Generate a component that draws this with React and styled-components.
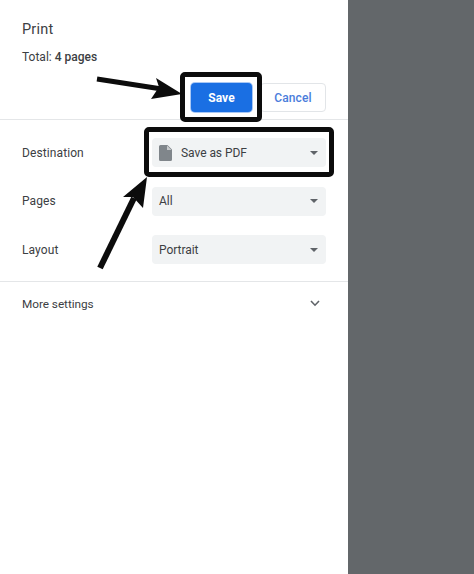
import React from "react";
import styled, { createGlobalStyle } from "styled-components";

const Global = createGlobalStyle`
  html, body { margin: 0; padding: 0; background: #fff; }
  body { font-family: Roboto, "Liberation Sans", sans-serif; }
`;

const Page = styled.div`
  position: relative;
  display: flex;
  width: 474px;
  height: 574px;
  overflow: hidden;
  background: #fff;
`;

const Sidebar = styled.aside`
  width: 348px;
  flex: none;
  background: #fff;
  color: #3c4043;
`;

const Preview = styled.main`
  flex: 1;
  background: #63676a;
`;

const Header = styled.header`
  height: 120px;
  padding: 21px 22px 0;
  box-sizing: border-box;
  border-bottom: 1px solid #e4e6e8;
  display: flex;
  flex-direction: column;
`;

const Title = styled.h1`
  margin: 0;
  font-size: 14.5px;
  line-height: 17px;
  font-weight: 400;
  letter-spacing: 0.2px;
  color: #3c4043;
`;

const Total = styled.div`
  margin-top: 12px;
  font-size: 12px;
  line-height: 15px;
  color: #3c4043;
`;

const Strong = styled.span`
  font-weight: 500;
`;

const Actions = styled.div`
  margin-top: 18px;
  display: flex;
  justify-content: flex-end;
  gap: 8px;
`;

const ActionButton = styled.button`
  height: 29px;
  width: ${(p) => p.$width}px;
  box-sizing: border-box;
  padding: 0;
  font: ${(p) => (p.$primary ? 700 : 500)} 12px Roboto, sans-serif;
  letter-spacing: 0.1px;
  border-radius: 4px;
  background: ${(p) => (p.$primary ? "#1a6fe3" : "#fff")};
  color: ${(p) => (p.$primary ? "#fff" : "#4a7ddb")};
  border: ${(p) => (p.$primary ? "none" : "1px solid #e2e5e8")};
  box-shadow: ${(p) => (p.$primary ? "0 0 0 1px #a9c8f5" : "none")};
`;

const Settings = styled.section`
  padding-top: 18px;
  height: 162px;
  box-sizing: border-box;
  border-bottom: 1px solid #e4e6e8;
  display: flex;
  flex-direction: column;
  gap: 19.5px;
`;

const Row = styled.div`
  display: flex;
  align-items: center;
  justify-content: space-between;
  padding: 0 22px;
  font-size: 12px;
  color: #3c4043;
  letter-spacing: 0.1px;
`;

const Select = styled.div`
  width: 174px;
  height: 29px;
  box-sizing: border-box;
  padding: 0 7px;
  display: flex;
  align-items: center;
  gap: 9px;
  border-radius: 4px;
  background: #f1f3f4;
`;

const Value = styled.span`
  flex: 1;
  font-size: 12px;
  letter-spacing: -0.05px;
  color: #3c4043;
`;

const Caret = styled.span`
  width: 0;
  height: 0;
  margin-right: 1px;
  border-left: 4.5px solid transparent;
  border-right: 4.5px solid transparent;
  border-top: 4.5px solid #5f6368;
`;

const More = styled(Row)`
  height: 43px;
  padding-right: 28px;
  font-size: 11.8px;
  letter-spacing: -0.05px;
`;

const Frame = styled.div`
  position: absolute;
  left: ${(p) => p.$x}px;
  top: ${(p) => p.$y}px;
  width: ${(p) => p.$w}px;
  height: ${(p) => p.$h}px;
  box-sizing: border-box;
  border: 5px solid #0c0c0c;
  border-radius: 5px;
  pointer-events: none;
`;

const Arrows = styled.svg`
  position: absolute;
  left: 0;
  top: 0;
  pointer-events: none;
`;

const SettingRow = ({ label, children }) => (
  <Row>
    <span>{label}</span>
    <Select>{children}</Select>
  </Row>
);

export default function App() {
  return (
    <Page>
      <Global />
      <Sidebar>
        <Header>
          <Title>Print</Title>
          <Total>
            Total: <Strong>4 pages</Strong>
          </Total>
          <Actions>
            <ActionButton $primary $width={61}>Save</ActionButton>
            <ActionButton $width={66}>Cancel</ActionButton>
          </Actions>
        </Header>
        <Settings>
          <SettingRow label="Destination">
            <svg width="13" height="16" viewBox="0 0 13 16">
              <path d="M1.5 0H8.5L13 4.5V14.5A1.5 1.5 0 0 1 11.5 16H1.5A1.5 1.5 0 0 1 0 14.5V1.5A1.5 1.5 0 0 1 1.5 0Z" fill="#80868b" />
              <path d="M8 0.5V5H12.5Z" fill="#c9ccce" />
            </svg>
            <Value>Save as PDF</Value>
            <Caret />
          </SettingRow>
          <SettingRow label="Pages">
            <Value>All</Value>
            <Caret />
          </SettingRow>
          <SettingRow label="Layout">
            <Value>Portrait</Value>
            <Caret />
          </SettingRow>
        </Settings>
        <More>
          <span>More settings</span>
          <svg width="10" height="7" viewBox="0 0 10 7">
            <path d="M1 1L5 5.2L9 1" fill="none" stroke="#5f6368" strokeWidth="1.6" />
          </svg>
        </More>
      </Sidebar>
      <Preview />
      <Frame $x={180} $y={72} $w={82} $h={50} />
      <Frame $x={144} $y={127} $w={190} $h={50} />
      <Arrows width="474" height="574" viewBox="0 0 474 574">
        <path d="M97 79L165 89.5" stroke="#0c0c0c" strokeWidth="5" fill="none" />
        <path d="M182 94L156 78L159 87L151 99Z" fill="#0c0c0c" />
        <path d="M100 268L134 198" stroke="#0c0c0c" strokeWidth="6" fill="none" />
        <path d="M147 177L123 197L133 197L143 208Z" fill="#0c0c0c" />
      </Arrows>
    </Page>
  );
}
